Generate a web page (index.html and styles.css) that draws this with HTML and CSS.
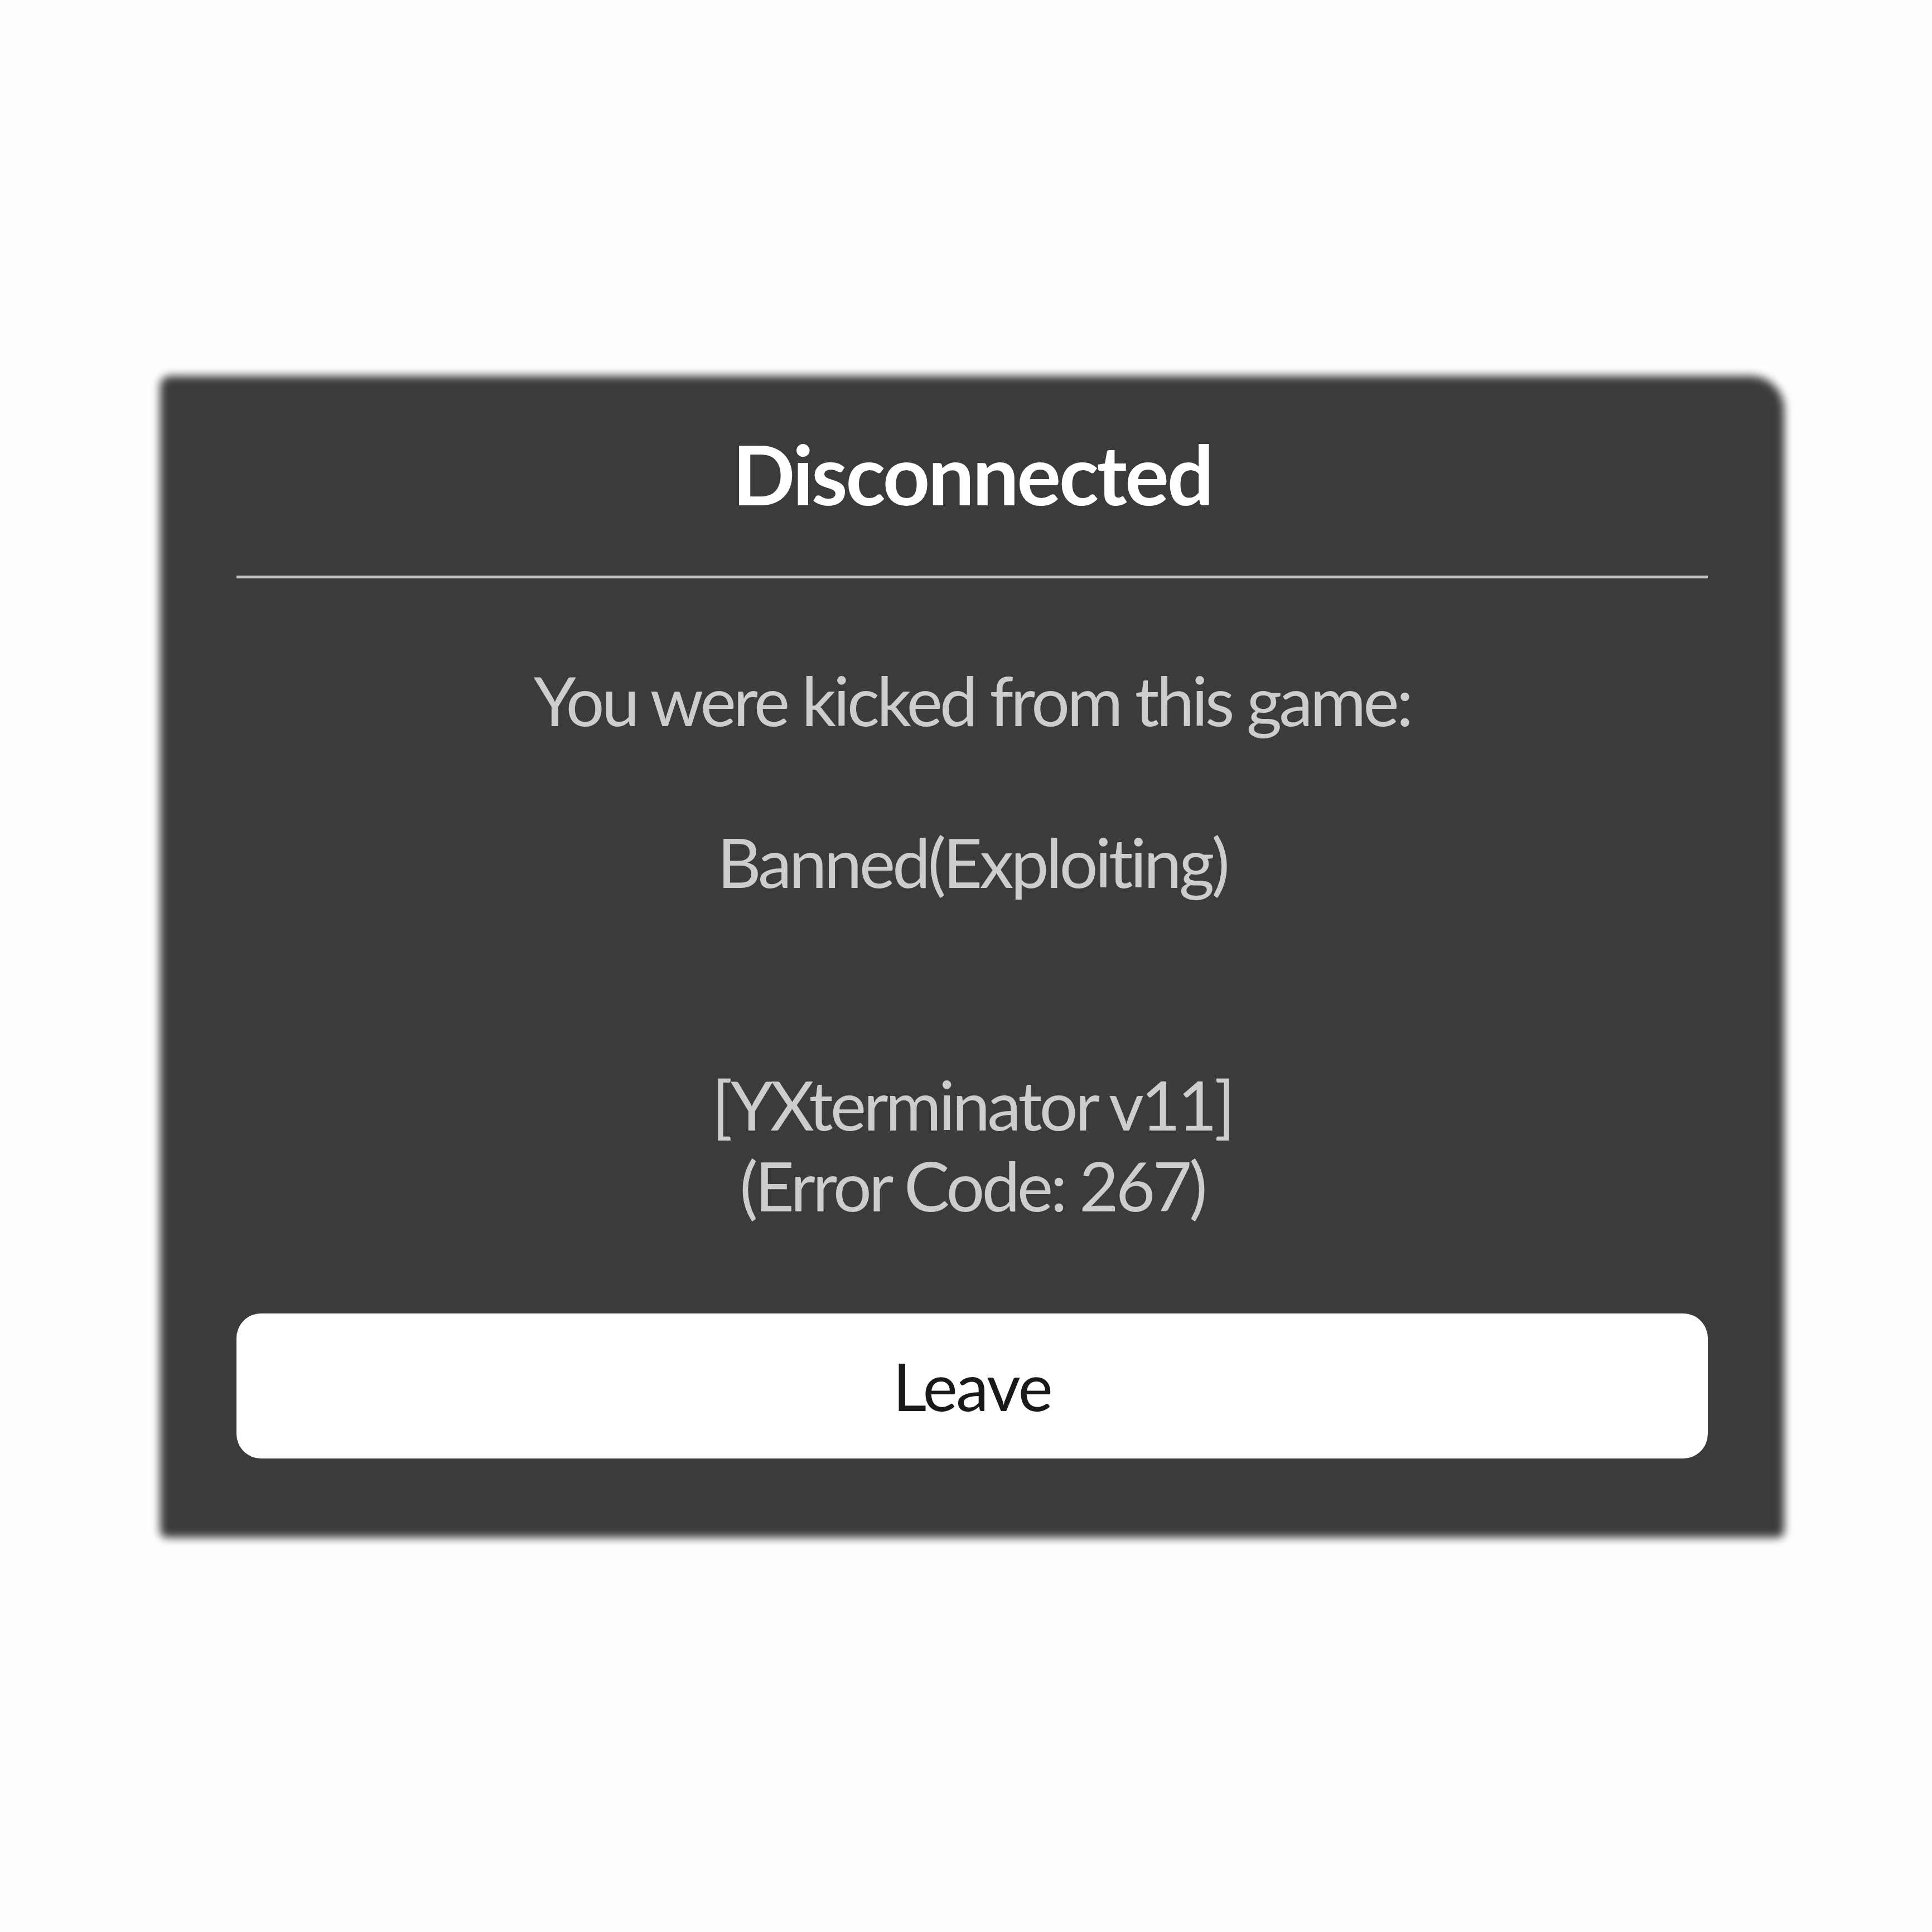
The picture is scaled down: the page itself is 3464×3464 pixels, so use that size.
FILE: index.html
```html
<!DOCTYPE html>
<html lang="en">
<head>
<meta charset="utf-8">
<title>Disconnected</title>
<link rel="stylesheet" href="styles.css">
</head>
<body>
<main class="page">
  <section class="dialog">
    <h1 class="title">Disconnected</h1>
    <hr class="divider">
    <p class="message">You were kicked from this game:<br><br>Banned(Exploiting)<br><br><br>[YXterminator v11]<br>(Error Code: 267)</p>
    <button class="leave">Leave</button>
  </section>
</main>
</body>
</html>
```

FILE: styles.css
```css
html, body {
  margin: 0;
  padding: 0;
  background: #fdfefe;
}
.page {
  width: 3464px;
  height: 3464px;
  padding-top: 674px;
  padding-left: 287px;
  box-sizing: border-box;
}
.dialog {
  position: relative;
  width: 2912px;
  height: 2083px;
  box-sizing: border-box;
  padding: 101px 137px 142px;
  display: flex;
  flex-direction: column;
  align-items: stretch;
  font-family: Lato, "Open Sans", sans-serif;
  font-variant-ligatures: none;
  isolation: isolate;
}
.dialog::before {
  content: "";
  position: absolute;
  inset: 0;
  background: #393b3d;
  border-radius: 18px 60px 12px 12px;
  filter: blur(8px);
  z-index: -1;
}
.title {
  margin: 0;
  font-size: 148px;
  line-height: 148px;
  font-weight: 700;
  letter-spacing: -3.7px;
  color: #ffffff;
  text-align: center;
}
.divider {
  margin: 109px 0 0;
  border: 0;
  height: 5px;
  background: #c2c3c4;
}
.message {
  margin: 146px 0 0;
  font-size: 122px;
  line-height: 145px;
  letter-spacing: -5px;
  color: #cdcdcd;
  text-align: center;
}
.leave {
  margin-top: auto;
  height: 260px;
  border: 0;
  border-radius: 44px;
  background: #ffffff;
  color: #191919;
  font-family: Lato, "Open Sans", sans-serif;
  font-size: 118px;
  line-height: 1;
  letter-spacing: -2.6px;
  display: flex;
  align-items: center;
  justify-content: center;
  padding: 0;
}
```
